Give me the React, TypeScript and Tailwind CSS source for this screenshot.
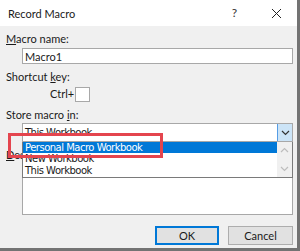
import React from 'react';

const ui = "font-['Lato','Liberation_Sans',sans-serif]";
const list = "font-['DejaVu_Sans','Liberation_Sans',sans-serif] text-[10px] tracking-[-0.5px]";

const Chevron = ({ up = false, color = '#333' }: { up?: boolean; color?: string }) => (
  <svg width="9" height="6" viewBox="0 0 9 6" className="block">
    <path d={up ? 'M1 5 L4.5 1.5 L8 5' : 'M1 1 L4.5 4.5 L8 1'} fill="none" stroke={color} strokeWidth="1.2" />
  </svg>
);

export default function App() {
  return (
    <div className={`relative w-[300px] h-[251px] bg-[#737373] ${ui} text-[11px] text-[#1a1a1a]`}>
      <div className="w-[297px] h-[248px] flex flex-col bg-[#f0f0f0] relative">
        {/* Title bar */}
        <div className="h-[26px] bg-white flex items-center pl-[8px] pr-[15px]">
          <span className="text-[11px] leading-none">Record Macro</span>
          <span className="ml-auto mr-[34px] text-[12px] text-[#333]">?</span>
          <svg width="11" height="11" viewBox="0 0 11 11">
            <path d="M1 1 L10 10 M10 1 L1 10" stroke="#222" strokeWidth="1" />
          </svg>
        </div>

        {/* Body */}
        <div className="flex flex-col pl-[6px] pr-[4px]">
          <div className="mt-[7px] leading-[12px]">
            <u>M</u>acro name:
          </div>
          <div className="mt-[3px] ml-[16px] h-[16px] bg-white border border-[#a8a8a8] flex items-center pl-[2px] leading-none">
            Macro1
          </div>

          <div className="mt-[7px] leading-[12px]">
            Shortcut <u>k</u>ey:
          </div>
          <div className="mt-[4px] flex items-center h-[15px]">
            <span className="ml-[44px] w-[25px]">Ctrl+</span>
            <div className="w-[15px] h-[15px] bg-white border border-[#a8a8a8]" />
          </div>

          <div className="mt-[7px] leading-[12px]">
            Store macro <u>i</u>n:
          </div>
          <div className="mt-[2px] ml-[16px] h-[19px] bg-white border border-[#a8a8a8] flex items-stretch">
            <span className={`flex-1 flex items-center pl-[2px] ${list}`}>This Workbook</span>
            <div className="w-[15px] bg-[#cce4f7] border-l border-[#569de5] flex items-center justify-center">
              <Chevron color="#333" />
            </div>
          </div>

          <div className="mt-[7px] leading-[12px]">
            <u>D</u>escription:
          </div>
          <div className="mt-[2px] ml-[16px] h-[52px] bg-white border border-[#a8a8a8]" />

          <div className="mt-[11px] flex justify-end gap-[9px]">
            <button className="w-[64px] h-[19px] bg-[#e1e1e1] border-2 border-[#0078d7] text-[11px] leading-none">
              OK
            </button>
            <button className="w-[65px] h-[19px] bg-[#e1e1e1] border border-[#adadad] text-[11px] leading-none">
              Cancel
            </button>
          </div>
        </div>

        {/* Dropdown list */}
        <div className={`absolute left-[22px] top-[142px] w-[271px] h-[36px] bg-white border border-[#7a7a7a] border-t-0 flex ${list}`}>
          <div className="flex-1 flex flex-col">
            <div className="h-[11px] bg-[#0078d7] text-white flex items-center pl-[2px] leading-none">Personal Macro Workbook</div>
            <div className="h-[12px] flex items-center pl-[2px] leading-none">New Workbook</div>
            <div className="h-[12px] flex items-center pl-[2px] leading-none">This Workbook</div>
          </div>
          <div className="w-[15px] bg-[#f0f0f0] flex flex-col items-center justify-between py-[5px]">
            <Chevron up color="#bdbdbd" />
            <Chevron color="#bdbdbd" />
          </div>
        </div>

        {/* Annotation */}
        <div className="absolute left-[8px] top-[133px] w-[155px] h-[25px] border-[3px] border-[#e4454e]" />
      </div>
    </div>
  );
}
